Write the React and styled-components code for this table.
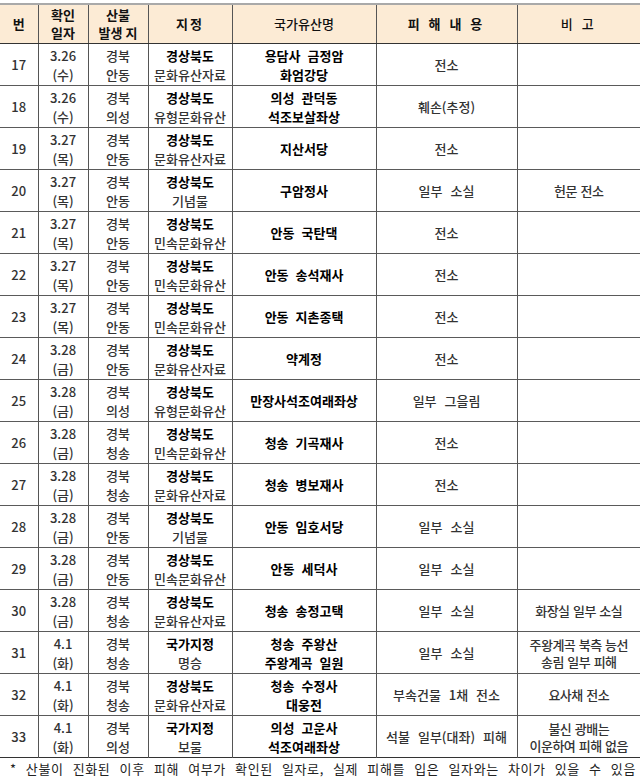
import React from 'react';
import styled, { createGlobalStyle } from 'styled-components';

const Global = createGlobalStyle`
  html, body { margin: 0; padding: 0; background: #fff; }
  body {
    font-family: "Noto Sans CJK KR", "Noto Sans", sans-serif;
    color: #222;
  }
`;

const Page = styled.div`
  width: 640px;
  padding-top: 3px;
`;

const Table = styled.table`
  width: 640px;
  table-layout: fixed;
  border-collapse: collapse;
  border-top: 2px solid #a9a9a9;
  border-bottom: 1px solid #333;
`;

const HeadCell = styled.th`
  background: #fcebd5;
  height: 38px;
  padding: 0;
  font-size: 13px;
  font-weight: ${(p) => (p.$light ? 500 : 700)};
  line-height: 18px;
  color: #111;
  text-align: center;
  vertical-align: middle;
  border-bottom: 1px solid #333;
  border-left: 1px solid #555;
  letter-spacing: ${(p) => p.$spread || '0'};
  &:first-child { border-left: none; }
`;

const Row = styled.tr`
  height: 42px;
`;

const Cell = styled.td`
  padding: 0;
  height: 41px;
  text-align: center;
  vertical-align: middle;
  font-size: 13px;
  line-height: ${(p) => (p.$tight ? '17px' : '19px')};
  color: ${(p) => (p.$bold ? '#000' : '#333')};
  font-weight: ${(p) => (p.$bold ? 700 : 500)};
  word-spacing: ${(p) => p.$wordGap || '0'};
  letter-spacing: ${(p) => p.$letter || '0'};
  white-space: nowrap;
  border-top: 1px solid #5a5a5a;
  border-left: 1px solid #555;
  &:first-child { border-left: none; }
`;

const Line = styled.div`
  font-weight: ${(p) => (p.$bold ? 700 : 'inherit')};
  color: ${(p) => (p.$bold ? '#000' : 'inherit')};
`;

const Footnote = styled.div`
  height: 22px;
  padding: 0 4px 0 10px;
  font-size: 13px;
  line-height: 22px;
  color: #222;
  letter-spacing: 0.6px;
  text-align: justify;
  text-align-last: justify;
  white-space: nowrap;
`;

const rows = [
  ['17', '3.26', '(수)', '안동', '문화유산자료', ['용담사 금정암', '화엄강당'], '전소', []],
  ['18', '3.26', '(수)', '의성', '유형문화유산', ['의성 관덕동', '석조보살좌상'], '훼손(추정)', []],
  ['19', '3.27', '(목)', '안동', '문화유산자료', ['지산서당'], '전소', []],
  ['20', '3.27', '(목)', '안동', '기념물', ['구암정사'], '일부 소실', ['헌문 전소']],
  ['21', '3.27', '(목)', '안동', '민속문화유산', ['안동 국탄댁'], '전소', []],
  ['22', '3.27', '(목)', '안동', '민속문화유산', ['안동 송석재사'], '전소', []],
  ['23', '3.27', '(목)', '안동', '민속문화유산', ['안동 지촌종택'], '전소', []],
  ['24', '3.28', '(금)', '안동', '문화유산자료', ['약계정'], '전소', []],
  ['25', '3.28', '(금)', '의성', '유형문화유산', ['만장사석조여래좌상'], '일부 그을림', []],
  ['26', '3.28', '(금)', '청송', '민속문화유산', ['청송 기곡재사'], '전소', []],
  ['27', '3.28', '(금)', '청송', '문화유산자료', ['청송 병보재사'], '전소', []],
  ['28', '3.28', '(금)', '안동', '기념물', ['안동 임호서당'], '일부 소실', []],
  ['29', '3.28', '(금)', '안동', '민속문화유산', ['안동 세덕사'], '일부 소실', []],
  ['30', '3.28', '(금)', '청송', '문화유산자료', ['청송 송정고택'], '일부 소실', ['화장실 일부 소실']],
  ['31', '4.1', '(화)', '청송', '명승', ['청송 주왕산', '주왕계곡 일원'], '일부 소실', ['주왕계곡 북측 능선', '송림 일부 피해'], '국가지정'],
  ['32', '4.1', '(화)', '청송', '문화유산자료', ['청송 수정사', '대웅전'], '부속건물 1채 전소', ['요사채 전소']],
  ['33', '4.1', '(화)', '의성', '보물', ['의성 고운사', '석조여래좌상'], '석불 일부(대좌) 피해', ['불신 광배는', '이운하여 피해 없음'], '국가지정'],
];

export default function App() {
  return (
    <Page>
      <Global />
      <Table>
        <colgroup>
          <col style={{ width: 38 }} />
          <col style={{ width: 50 }} />
          <col style={{ width: 60 }} />
          <col style={{ width: 84 }} />
          <col style={{ width: 144 }} />
          <col style={{ width: 141 }} />
          <col style={{ width: 123 }} />
        </colgroup>
        <thead>
          <tr>
            <HeadCell>번</HeadCell>
            <HeadCell>확인<br />일자</HeadCell>
            <HeadCell>산불<br />발생 지</HeadCell>
            <HeadCell $spread="2px">지정</HeadCell>
            <HeadCell $light>국가유산명</HeadCell>
            <HeadCell $spread="3px">피 해 내 용</HeadCell>
            <HeadCell $spread="3px" $light>비 고</HeadCell>
          </tr>
        </thead>
        <tbody>
          {rows.map(([no, date, day, town, kind, name, damage, note, level]) => (
            <Row key={no}>
              <Cell>{no}</Cell>
              <Cell>
                <Line>{date}</Line>
                <Line>{day}</Line>
              </Cell>
              <Cell>
                <Line>경북</Line>
                <Line>{town}</Line>
              </Cell>
              <Cell>
                <Line $bold>{level || '경상북도'}</Line>
                <Line>{kind}</Line>
              </Cell>
              <Cell $bold $wordGap="4px">
                {name.map((n) => (
                  <Line key={n}>{n}</Line>
                ))}
              </Cell>
              <Cell $wordGap="5px">{damage}</Cell>
              <Cell $tight={note.length > 1} $letter="-0.5px" $wordGap="1px">
                {note.map((n) => (
                  <Line key={n}>{n}</Line>
                ))}
              </Cell>
            </Row>
          ))}
        </tbody>
      </Table>
      <Footnote>* 산불이 진화된 이후 피해 여부가 확인된 일자로, 실제 피해를 입은 일자와는 차이가 있을 수 있음</Footnote>
    </Page>
  );
}
